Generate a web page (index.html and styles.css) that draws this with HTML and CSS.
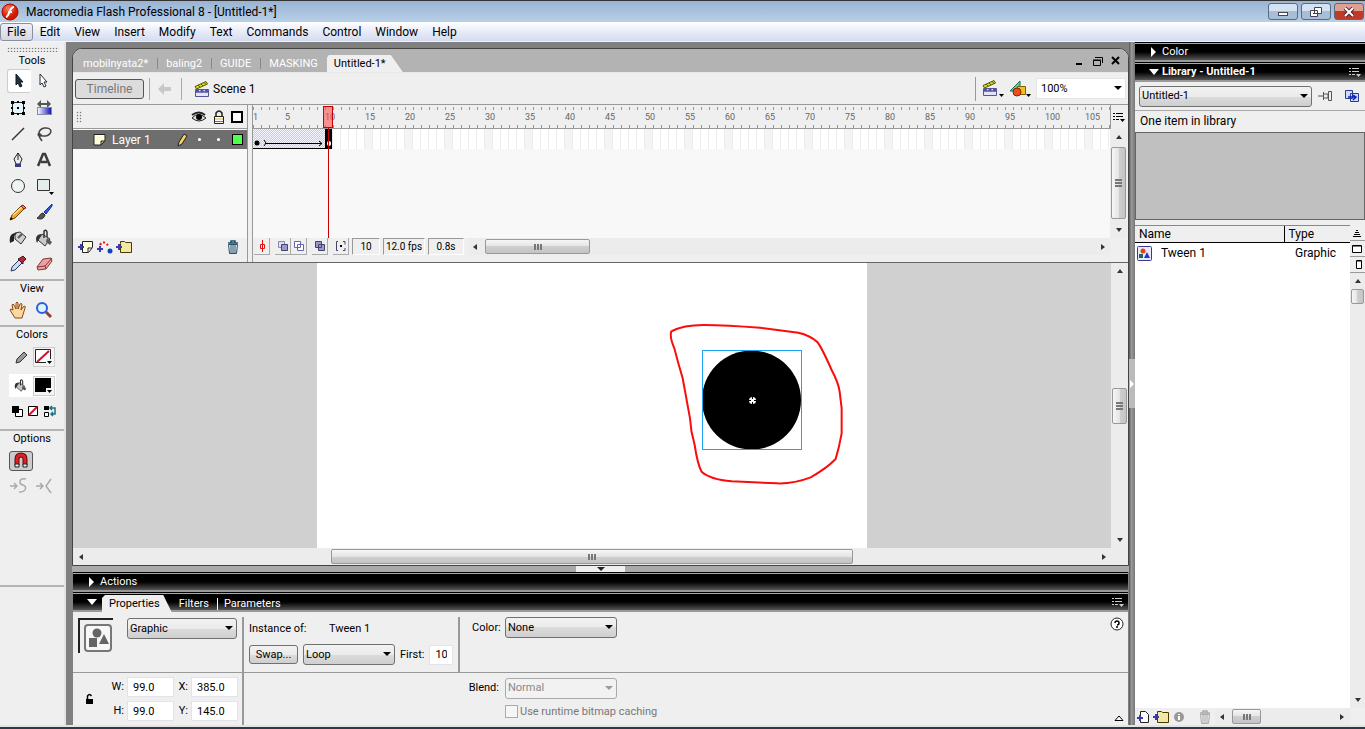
FILE: index.html
```html
<!DOCTYPE html>
<html lang="en">
<head>
<meta charset="UTF-8">
<title>Macromedia Flash Professional 8 - [Untitled-1*]</title>
<link rel="stylesheet" href="styles.css">
</head>
<body>

<!-- shared icons -->
<svg class="defs" width="0" height="0">
  <defs>
    <linearGradient id="blueFade"><stop offset="0" stop-color="#fff"/><stop offset="1" stop-color="#1010b0"/></linearGradient>
    <radialGradient id="redBall" cx=".4" cy=".3"><stop offset="0" stop-color="#ff8060"/><stop offset="1" stop-color="#d41800"/></radialGradient>
    <symbol id="clapper" viewBox="0 0 16 16">
      <path d="M1 5.500L12 .5l1.500 2.500L2.500 8z" fill="#d8d820" stroke="#5a5a00"/>
      <path d="M4 4l2 2M7 3l2 2M10 1.500l2 2" stroke="#5a5a00"/>
      <path d="M1.500 8.500h13v7h-13z" fill="#e4e4ff" stroke="#55559a"/>
      <path d="M2 11h12M2 9.500h3M6.500 9.500h3M11 9.500h3" stroke="#55559a" stroke-width="1.500"/>
    </symbol>
    <symbol id="menu" viewBox="0 0 12 10">
      <path d="M0 1.500h2M0 4.500h2M0 7.500h2M3 1.500h7M3 4.500h7M3 7.500h3" stroke="currentColor"/>
      <path d="M7 7h5l-2.500 3z" fill="currentColor"/>
    </symbol>
    <symbol id="pencil" viewBox="0 0 18 18">
      <path d="M1 17l2-5L12 3l3 3-9 9z" fill="#f5a623" stroke="#6b4210"/>
      <path d="M4 12l9-8" stroke="#ffe08a" stroke-width="1.500"/>
      <path d="M12 3l2-1 3 3-2 1z" fill="#f08080" stroke="#7b2010"/>
      <path d="M1 17l1-3 2 2z"/>
    </symbol>
    <symbol id="bucket" viewBox="0 0 18 18">
      <path d="M7 5l8 5-5 7-7-6z" fill="#c8c8c8" stroke="#333"/>
      <path d="M9 9V2q2-2 3 1v5" fill="none" stroke="#333" stroke-width="1.500"/>
      <path d="M7 5C1 5 0 9 2 14l2-4z" fill="#333"/>
      <path d="M12 9l5 4-2 3-4-3z" fill="#555"/>
    </symbol>
    <symbol id="folderPlus" viewBox="0 0 16 14">
      <path d="M4.500 3.500v-2h4l1 1h6v10h-11z" fill="#f4e6a4" stroke="#4a3a00"/>
      <path d="M0 7h6M3 4v6" stroke="#3a3ab0" stroke-width="2"/>
    </symbol>
    <symbol id="trash" viewBox="0 0 12 14">
      <path d="M1 3h10M4 3V1h4v2" fill="none" stroke="currentColor" stroke-width="1.500"/>
      <path d="M1.500 4.500h9l-1 9h-7z" fill="none" stroke="currentColor"/>
      <path d="M4 5v8M6 5v8M8 5v8" stroke="currentColor"/>
    </symbol>
  </defs>
</svg>

<header class="titlebar">
  <svg width="18" height="18" viewBox="0 0 18 18"><circle cx="9" cy="9" r="8" fill="url(#redBall)" stroke="#a01000"/><path d="M13 4C8 4 9 13 5 14M7 9h4" fill="none" stroke="#fff" stroke-width="2"/></svg>
  <h1>Macromedia Flash Professional 8 - [Untitled-1*]</h1>
  <div class="window-buttons">
    <button aria-label="Minimize"><svg width="12" height="12"><rect x="1.500" y="6.500" width="9" height="3" fill="#fff" stroke="#445"/></svg></button>
    <button aria-label="Restore"><svg width="12" height="12"><path d="M4.500 1.500h7v6h-7zM.5 4.500h7v6h-7z" fill="#fff" stroke="#445"/><path d="M3 7h2v1H3z" fill="#445"/></svg></button>
    <button class="close" aria-label="Close"><svg width="12" height="10"><path d="M2 1l8 8M10 1L2 9" stroke="#523" stroke-width="4"/><path d="M2 1l8 8M10 1L2 9" stroke="#fff" stroke-width="2"/></svg></button>
  </div>
</header>

<nav class="menubar">
  <button class="open">File</button>
  <button>Edit</button>
  <button>View</button>
  <button>Insert</button>
  <button>Modify</button>
  <button>Text</button>
  <button>Commands</button>
  <button>Control</button>
  <button>Window</button>
  <button>Help</button>
</nav>

<div class="workspace">

  <aside class="tools">
    <div class="grip"></div>
    <section>
      <h2>Tools</h2>
      <div class="tool-grid">
        <button class="selected" aria-label="Selection"><svg width="18" height="18"><path d="M6 2l7 8h-3l2 4-2 1-2-4-2 2z" fill="#223044" stroke="#101820"/></svg></button>
        <button aria-label="Subselection"><svg width="18" height="18"><path d="M5 1l7 8H9l2 4-2 1-2-4-2 2z" fill="#fff" stroke="#202c38"/></svg></button>
        <button aria-label="Free transform"><svg width="18" height="18"><rect x="3.500" y="3.500" width="11" height="11" fill="#e4f4fc" stroke="#222"/><path d="M2 2h3v3H2zM13 2h3v3h-3zM2 13h3v3H2zM13 13h3v3h-3zM8 2h2v2H8zM8 14h2v2H8zM2 8h2v2H2zM14 8h2v2h-2zM8 8h2v2H8z"/></svg></button>
        <button aria-label="Gradient transform"><svg width="18" height="18"><path d="M2 5l4-4v3h6V1l4 4-4 4V6H6v3z" fill="#555"/><rect x="2.500" y="8.500" width="14" height="7" fill="url(#blueFade)" stroke="#88a"/></svg></button>
        <button aria-label="Line"><svg width="18" height="18"><path d="M3 15L15 3" stroke="#333" stroke-width="1.500"/></svg></button>
        <button aria-label="Lasso"><svg width="18" height="18"><ellipse cx="10" cy="7" rx="6" ry="4" transform="rotate(-12 10 7)" fill="none" stroke="#444" stroke-width="1.500"/><path d="M4 8c-3 3 3 4 2 2s-3 0-1 3l2 3" fill="none" stroke="#444" stroke-width="1.500"/></svg></button>
        <button aria-label="Pen"><svg width="18" height="18"><path d="M9 2l4 6-2 5H7L5 8z" fill="#eee" stroke="#222"/><path d="M9 2v7" stroke="#222"/><path d="M6 13h6v3H6z" fill="#3a3a80"/></svg></button>
        <button aria-label="Text"><svg width="18" height="18"><path d="M3 15L8 3h2l5 12M6 11h6" fill="none" stroke="#3c3c3c" stroke-width="2.500"/></svg></button>
        <button aria-label="Oval"><svg width="18" height="18"><circle cx="9" cy="9" r="6.500" fill="#eef4f4" stroke="#333"/></svg></button>
        <button aria-label="Rectangle"><svg width="20" height="20"><path d="M3.500 3.500h12v11h-12z" fill="#e4ecec" stroke="#333"/><path d="M15 16h5l-2.500 3z"/></svg></button>
        <button aria-label="Pencil"><svg width="18" height="18"><use href="#pencil"/></svg></button>
        <button aria-label="Brush"><svg width="18" height="18"><path d="M17 1l-8 8 2 2 6-8z" fill="#2a5cf0" stroke="#102a90"/><path d="M2 15c3-1 2-4 6-5l2 2c-1 4-5 5-8 3z" fill="#555" stroke="#222"/></svg></button>
        <button aria-label="Ink bottle"><svg width="18" height="18"><path d="M6 4l5-1 6 5-5 7-6-5z" fill="#d0d0d0" stroke="#333"/><path d="M1 14C0 7 2 4 8 4L5 7v5z" fill="#222"/><path d="M9 9l4-4" stroke="#555" stroke-width="2"/></svg></button>
        <button aria-label="Paint bucket"><svg width="18" height="18"><use href="#bucket"/></svg></button>
        <button aria-label="Eyedropper"><svg width="18" height="18"><path d="M2 16l1-4 7-7 3 3-7 7z" fill="#bfe0f4" stroke="#335"/><path d="M9 4l2-1 3-2 3 3-3 3v2z" fill="#b02a3a" stroke="#501018"/></svg></button>
        <button aria-label="Eraser"><svg width="18" height="18"><path d="M2 12l6-8 8-1 1 3-6 8-8 1z" fill="#f0a0a0" stroke="#803a3a"/><path d="M2 12l8-1 7-8M10 11l1 3" fill="none" stroke="#803a3a"/></svg></button>
      </div>
    </section>
    <section>
      <h2>View</h2>
      <div class="tool-grid">
        <button aria-label="Hand"><svg width="18" height="18"><path d="M6 17L1 9q0-2 3 0L3 4q1-2 2 0l2 4V2q1-2 2 0v6l2-5q2-1 2 0l-1 6 3-4q2 0 1 2l-3 10z" fill="#fcd8a0" stroke="#8a4a10"/></svg></button>
        <button aria-label="Zoom"><svg width="18" height="18"><path d="M11 11l5 5" stroke="#904040" stroke-width="3"/><circle cx="7" cy="7" r="5" fill="#dcf2ff" stroke="#2a5ce0" stroke-width="2"/></svg></button>
      </div>
    </section>
    <section>
      <h2>Colors</h2>
      <div class="color-row">
        <svg width="16" height="16"><path d="M2 14l1-4 7-7 3 3-7 7z" fill="#999" stroke="#333"/></svg>
        <button class="swatch" aria-label="Stroke color"><svg width="18" height="16"><path d="M.5.5h15v13H.5z" fill="#fff" stroke="#222"/><path d="M2 13L14 2" stroke="#d01030" stroke-width="2"/><path d="M11 10h7v6h-7z" fill="#f4f4f4"/><path d="M12 12h5l-2.500 3z"/></svg></button>
      </div>
      <div class="color-row active">
        <svg width="13" height="13"><use href="#bucket"/></svg>
        <button class="swatch" aria-label="Fill color"><svg width="18" height="16"><path d="M0 0h16v14H0z"/><path d="M11 10h7v6h-7z" fill="#f4f4f4"/><path d="M12 12h5l-2.500 3z"/></svg></button>
      </div>
      <div class="mini-row">
        <svg width="12" height="12"><path d="M4.500 4.500h7v7h-7z" fill="#fff" stroke="#000"/><path d="M1 1h7v7H1z"/></svg>
        <svg width="12" height="12"><path d="M1.500 1.500h9v9h-9z" fill="#fff" stroke="#000"/><path d="M2 10l8-8" stroke="#d01030" stroke-width="2"/></svg>
        <svg width="14" height="12"><path d="M1 1h5v4H1z"/><path d="M1.500 7.500h4v4h-4z" fill="#fff" stroke="#000"/><path d="M7 3h5v6H8M9 1L7 3l2 2M10 7L8 9l2 2" fill="none" stroke="#1c7284" stroke-width="1.500"/></svg>
      </div>
    </section>
    <section class="options">
      <h2>Options</h2>
      <div class="tool-grid">
        <button class="pressed" aria-label="Snap to objects"><svg width="18" height="18"><path d="M5 13V7q0-4 4-4t4 4v6" fill="none" stroke="#501010" stroke-width="5"/><path d="M5 12V7q0-4 4-4t4 4v5" fill="none" stroke="#e02020" stroke-width="3"/><path d="M3 12h4v3H3zM11 12h4v3h-4z" fill="#eee" stroke="#222"/></svg></button>
      </div>
      <div class="tool-grid">
        <button disabled aria-label="Smooth"><svg width="18" height="18"><path d="M1 9h6M5 6l3 3-3 3M17 2c-8-1-7 5-3 6s4 7-4 7" fill="none" stroke="#aaa" stroke-width="1.500"/></svg></button>
        <button disabled aria-label="Straighten"><svg width="18" height="18"><path d="M1 9h6M5 6l3 3-3 3M16 2l-5 7 5 7" fill="none" stroke="#aaa" stroke-width="1.500"/></svg></button>
      </div>
    </section>
  </aside>

  <main class="center">
    <div class="document">
      <div class="tabs">
        <button>mobilnyata2*</button>
        <button>baling2</button>
        <button>GUIDE</button>
        <button>MASKING</button>
        <button class="active">Untitled-1*</button>
        <div class="doc-buttons">
          <svg width="10" height="10"><path d="M1 8h6" stroke="#000" stroke-width="2"/></svg>
          <svg width="10" height="10"><path d="M2 1.500h7.500V7M.5 4.500h7v5h-7zM0 4h8" fill="none" stroke="#000"/></svg>
          <svg width="10" height="10"><path d="M1 1l7 7M8 1L1 8" stroke="#000" stroke-width="2"/></svg>
        </div>
      </div>

      <div class="scenebar">
        <button class="timeline-btn">Timeline</button>
        <div class="back"><svg width="14" height="12"><path d="M0 6l6-6v4h7v4H6v4z" fill="#c8c8c8"/></svg></div>
        <svg width="16" height="16"><use href="#clapper"/></svg>
        <span class="scene-name">Scene 1</span>
        <div class="scene-right">
          <svg width="22" height="20"><use href="#clapper" width="16" height="18"/><path d="M17 15h5l-2.500 3z"/></svg>
          <svg width="22" height="20"><path d="M1 12L11 2v10z" fill="#58d0a0" stroke="#1c7050"/><path d="M8.500 7.500h8v8h-8z" fill="#f0c020" stroke="#806000"/><circle cx="8" cy="13" r="4" fill="#e85020" stroke="#902000"/><path d="M17 15h5l-2.500 3z"/></svg>
          <div class="select zoom"><select aria-label="Zoom level"><option>100%</option></select></div>
        </div>
      </div>

      <div class="timeline">
        <div class="layers">
          <div class="layers-head">
            <div class="dots"></div>
            <svg width="16" height="12"><path d="M1 7q6-7 14 0-7 6-14 0z" fill="#ddd" stroke="#222"/><circle cx="8" cy="6" r="3"/><path d="M1 4q7-5 13 0" fill="none" stroke="#222" stroke-width="2"/></svg>
            <svg width="12" height="14"><path d="M3 7V3q3-4 6 0v4" fill="none" stroke="#222" stroke-width="1.500"/><path d="M1.500 6.500h9v7h-9z" fill="#fff" stroke="#222"/><path d="M2 9h8" stroke="#e0b020"/><path d="M2 11.500h8" stroke="#3a7ac0"/></svg>
            <svg width="12" height="12"><rect x="1" y="1" width="10" height="10" fill="#fff" stroke="#000" stroke-width="2"/></svg>
          </div>
          <div class="layer">
            <svg width="14" height="12"><path d="M1 .5h11V7l-4 4H1z" fill="#ffffdc" stroke="#222"/><path d="M8 11V7h4z" fill="#bbb98a" stroke="#222"/></svg>
            <span class="layer-name">Layer 1</span>
            <svg width="11" height="14"><path d="M1 13l1-4 5-8 3 2-5 8z" fill="#f4d060" stroke="#222"/></svg>
            <i class="dot"></i>
            <i class="dot"></i>
            <i class="outline"></i>
          </div>
          <div class="layers-foot">
            <svg width="16" height="14"><path d="M4.500 1.500h10v6l-4 5h-6z" fill="#ffffdc" stroke="#222"/><path d="M10 12V8h4" fill="none" stroke="#222"/><path d="M0 7h6M3 4v6" stroke="#3a3ab0" stroke-width="2"/></svg>
            <svg width="16" height="14"><path d="M3 5q4-6 9 2" fill="none" stroke="#e01010" stroke-width="2" stroke-dasharray="2 2"/><path d="M0 9h6M3 6v6" stroke="#3a3ab0" stroke-width="2"/><circle cx="13" cy="11" r="2.500" fill="#1040c0"/></svg>
            <svg width="16" height="14"><use href="#folderPlus"/></svg>
            <svg class="trash" width="12" height="14"><use href="#trash"/></svg>
          </div>
        </div>

        <div class="frames">
          <div class="ruler">
            <span class="first">1</span><span>5</span><span>10</span><span>15</span><span>20</span><span>25</span><span>30</span><span>35</span><span>40</span><span>45</span><span>50</span><span>55</span><span>60</span><span>65</span><span>70</span><span>75</span><span>80</span><span>85</span><span>90</span><span>95</span><span>100</span><span>105</span>
          </div>
          <div class="track">
            <div class="tween"><svg width="72" height="9"><circle cx="4" cy="4" r="2.500"/><path d="M11 1l2 3-2 3M12 4.500h57M66 2l3 2.500L66 7" fill="none" stroke="#000"/></svg></div>
            <div class="keyframe"></div>
          </div>
          <div class="playhead"></div>
          <div class="frames-foot">
            <button aria-label="Center frame"><svg width="12" height="14"><path d="M6.500 1v12M4.500 5.500h4v4h-4z" fill="none" stroke="#e01010"/></svg></button>
            <button aria-label="Onion skin" class="gap-left"><svg width="12" height="12"><path d="M1.500 1.500h6v6h-6z" fill="#ddf" stroke="#88a"/><path d="M4.500 4.500h6v6h-6z" fill="#9a9ad0" stroke="#446"/></svg></button>
            <button aria-label="Onion skin outlines"><svg width="12" height="12"><path d="M1.500 1.500h6v6h-6zM4.500 4.500h6v6h-6z" fill="#fff" stroke="#66a"/></svg></button>
            <button aria-label="Edit multiple frames" class="gap-left"><svg width="12" height="12"><path d="M1.500 1.500h6v6h-6zM4.500 4.500h6v6h-6z" fill="#9a9ad0" stroke="#446"/></svg></button>
            <button aria-label="Modify onion markers" class="gap-left"><svg width="12" height="12"><path d="M3 1.500H1.500v9H3M8 1.500h2v3M10 8v2.500H8" fill="none" stroke="#446"/><path d="M5 5h2v2H5z"/></svg></button>
            <output class="w28">10</output>
            <output class="w42">12.0 fps</output>
            <output class="w36">0.8s</output>
            <div class="scroll-h">
              <i class="arrow left"></i>
              <i class="thumb timeline-thumb"></i>
              <i class="arrow right push"></i>
            </div>
          </div>
        </div>

        <div class="timeline-side">
          <div class="side-menu"><svg width="12" height="10"><use href="#menu"/></svg></div>
          <div class="scroll-v">
            <i class="arrow up"></i>
            <i class="thumb frames-thumb"></i>
            <i class="arrow down push"></i>
          </div>
        </div>
      </div>

      <div class="stage-area">
        <div class="pasteboard">
          <div class="stage">
            <svg width="550" height="285">
              <circle cx="434.500" cy="137" r="49.500"/>
              <rect x="385.500" y="87.500" width="99" height="99" fill="none" stroke="#1aa3f0"/>
              <circle cx="435.500" cy="137.500" r="3.500" fill="#fff"/>
              <path d="M431 137.500h9M435.500 133v9" stroke="#000"/>
              <path d="M435.500 136v3M434 137.500h3" stroke="#fff"/>
              <path transform="translate(343 47) scale(.3333)" d="M34 64Q70 45 130 45Q200 46 300 53L415 68Q450 76 472 96Q485 112 515 180Q536 220 539 245L545 295L545 370Q538 410 527 447Q500 475 452 502Q400 522 350 520L215 514Q150 508 125 485Q113 465 104 405Q92 365 90 325L68 205L55 160L43 115Q28 80 34 64z" fill="none" stroke="#fa0c0c" stroke-width="6"/>
            </svg>
          </div>
        </div>
        <div class="scroll-v">
          <i class="arrow up"></i>
          <i class="thumb stage-thumb-v"></i>
          <i class="arrow down push"></i>
        </div>
      </div>
      <div class="scroll-h stage-scroll">
        <i class="arrow left"></i>
        <i class="thumb stage-thumb-h"></i>
        <i class="arrow right push"></i>
      </div>
    </div>

    <div class="splitter-h"><button aria-label="Collapse panels"></button></div>

    <section class="panel">
      <header class="panel-head"><i class="tri closed"></i><h2>Actions</h2></header>
    </section>

    <section class="panel">
      <header class="panel-head with-tabs">
        <i class="tri"></i>
        <button class="active">Properties</button>
        <button>Filters</button>
        <button class="divided">Parameters</button>
        <svg class="panel-menu" width="12" height="10"><use href="#menu"/></svg>
      </header>
      <form class="properties">
        <div class="cell kind">
          <div class="symbol"><svg width="28" height="28"><rect x="1" y="1" width="26" height="26" rx="3" fill="#f8f8f8" stroke="#777" stroke-width="2"/><circle cx="13" cy="9" r="4.500" fill="#666"/><path d="M5 14h8v9H5zM15 20l5-10 5 10z" fill="#666"/></svg></div>
          <div class="select w110"><select aria-label="Instance behavior"><option>Graphic</option></select></div>
        </div>
        <div class="cell instance">
          <div class="line"><span class="caption">Instance of:</span><span>Tween 1</span></div>
          <div class="line">
            <button type="button" class="push-btn">Swap...</button>
            <div class="select w92"><select aria-label="Loop options"><option>Loop</option></select></div>
            <label for="first">First:</label>
            <input id="first" class="short" value="10">
          </div>
        </div>
        <div class="cell color">
          <label for="color">Color:</label>
          <div class="select w112"><select id="color"><option>None</option></select></div>
          <svg class="help" width="14" height="14"><circle cx="7" cy="7" r="6" fill="#fff" stroke="#222"/><path d="M5 6q0-2 2-2t2 2-2 2M7 9v2" fill="none" stroke="#000" stroke-width="1.500"/></svg>
        </div>
        <div class="cell size">
          <svg width="10" height="12"><path d="M2.500 6V3q2-3 4 0" fill="none" stroke="#000" stroke-width="1.500"/><path d="M1 6h7v5H1z"/></svg>
          <div class="size-grid">
            <label for="w">W:</label><input id="w" value="99.0">
            <label for="x">X:</label><input id="x" value="385.0">
            <label for="h">H:</label><input id="h" value="99.0">
            <label for="y">Y:</label><input id="y" value="145.0">
          </div>
        </div>
        <div class="cell blend">
          <label for="blend">Blend:</label>
          <div class="select w112 disabled"><select id="blend" disabled><option>Normal</option></select></div>
          <label class="check"><input type="checkbox" disabled>Use runtime bitmap caching</label>
          <svg class="expand" width="10" height="6"><path d="M1 5.500h8L5 1z" fill="#fff" stroke="#000"/></svg>
        </div>
      </form>
    </section>
  </main>

  <div class="splitter-v"><button aria-label="Collapse library"></button></div>

  <aside class="library">
    <header class="panel-head"><i class="tri closed"></i><h2>Color</h2></header>
    <header class="panel-head"><i class="tri"></i><h2 class="bold">Library - Untitled-1</h2><svg class="panel-menu" width="12" height="10"><use href="#menu"/></svg></header>
    <div class="lib-file">
      <div class="select"><select aria-label="Library file"><option>Untitled-1</option></select></div>
      <svg width="14" height="12"><path d="M0 6h5M5.500 2v8M6 4h4v4H6M10.500 1.500h3v9h-3z" fill="none" stroke="#555"/></svg>
      <svg width="14" height="12"><path d="M.5.500h7v8h-7zM5.500 3.500h8v8h-8z" fill="#c8dcff" stroke="#2a3a90"/><path d="M3 7h7M8 5l3 2-3 3" fill="none" stroke="#1020c0" stroke-width="1.500"/></svg>
    </div>
    <p class="lib-count">One item in library</p>
    <div class="lib-preview"></div>
    <div class="lib-body">
      <div class="lib-list">
        <table>
          <thead><tr><th>Name</th><th class="type">Type</th></tr></thead>
          <tbody>
            <tr>
              <td><svg width="15" height="15"><rect x=".5" y=".5" width="14" height="14" rx="1" fill="#e8e8ff" stroke="#3a3a90"/><circle cx="6" cy="5" r="2.500" fill="#e84010"/><path d="M2 8h4v4H2z" fill="#107050"/><path d="M7 12l3-6 3 6z" fill="#3030d0"/></svg><span>Tween 1</span></td>
              <td class="type">Graphic</td>
            </tr>
          </tbody>
        </table>
      </div>
      <div class="lib-side">
        <button aria-label="Sort order"><svg width="10" height="10"><path d="M1 8.500h8M2 6.500h6M3 4.500h4M4 2.500h2" stroke="#000"/></svg></button>
        <button aria-label="Wide view"><svg width="10" height="10"><path d="M.5 1.500h9v7h-9zM1 2h8" fill="#fff" stroke="#000"/></svg></button>
        <button aria-label="Narrow view"><svg width="10" height="10"><path d="M4.500.500h5v8h-5zM5 1h4" fill="#fff" stroke="#000"/></svg></button>
        <div class="scroll-v">
          <i class="arrow up"></i>
          <i class="thumb lib-thumb-v"></i>
          <i class="arrow down push"></i>
        </div>
      </div>
    </div>
    <footer class="lib-foot">
      <svg width="12" height="14"><path d="M3.500 1.500h5l3 3v8h-8z" fill="#fff" stroke="#222"/><path d="M0 8h6M3 5v6" stroke="#3a3ab0" stroke-width="2"/></svg>
      <svg width="16" height="14"><use href="#folderPlus"/></svg>
      <svg width="12" height="12"><circle cx="6" cy="6" r="5" fill="#999"/><path d="M6 3v1M6 5v4" stroke="#fff" stroke-width="2"/></svg>
      <svg class="trash off" width="12" height="14"><use href="#trash"/></svg>
      <div class="scroll-h">
        <i class="arrow left"></i>
        <i class="thumb lib-thumb-h"></i>
        <i class="arrow right push"></i>
      </div>
    </footer>
  </aside>

</div>

</body>
</html>
```

FILE: styles.css
```css
*, *::before, *::after {
  box-sizing: border-box;
}

body {
  margin: 0;
  height: 100vh;
  display: flex;
  flex-direction: column;
  font-family: Roboto, "Open Sans", sans-serif;
  font-size: 11px;
  line-height: 16px;
  color: #000;
  background: #808080;
  border-bottom: 2px solid #2c3a48;
  overflow: hidden;
}

h1, h2, p {
  margin: 0;
  font-size: inherit;
  font-weight: normal;
}

svg {
  display: block;
  flex: none;
}

.defs {
  position: absolute;
}

button, input, select {
  font: inherit;
  color: inherit;
  margin: 0;
  padding: 0;
  border: 0;
  background: none;
}

/* title and menu */
.titlebar {
  display: flex;
  align-items: center;
  height: 22px;
  flex: none;
  padding-left: 1px;
  border-top: 1px solid #333;
  background: linear-gradient(#9ab4d4, #b8cfe8);
}

.titlebar h1 {
  flex: 1;
  margin-left: 7px;
  font-size: 12px;
}

.window-buttons {
  display: flex;
  gap: 3px;
  padding-right: 1px;
}

.window-buttons button {
  display: flex;
  align-items: center;
  justify-content: center;
  width: 30px;
  height: 17px;
  border: 1px solid #5a6a80;
  border-radius: 3px;
  background: linear-gradient(#d4e2f2 50%, #a8bdd6 50%);
}

.window-buttons .close {
  background: linear-gradient(#e0a090 50%, #c03a28 50%);
}

.menubar {
  display: flex;
  height: 20px;
  flex: none;
  padding-top: 1px;
  border-bottom: 1px solid #f4f4f4;
  background: linear-gradient(#fff, #e8ecf8 50%, #d4dcf0);
  font-size: 12px;
}

.menubar button {
  height: 18px;
  padding: 0 6px;
  border: 1px solid transparent;
}

.menubar .open {
  border-color: #8a8f9a;
  border-radius: 3px;
  background: linear-gradient(#eef0f6, #d4d8e4);
}

.workspace {
  display: flex;
  flex: 1;
  min-height: 0;
  border-bottom: 2px solid #e4e4e4;
}

/* tools */
.tools {
  width: 66px;
  flex: none;
  background: #efefef;
  border-right: 2px solid #e4e4e4;
}

.grip {
  height: 5px;
  margin: 5px 5px 1px 7px;
  background: radial-gradient(circle, #777 30%, transparent 50%) 0 0 / 3px 3px;
}

.tools section {
  padding-bottom: 2px;
  border-bottom: 2px solid #b4b4b4;
}

.tools h2 {
  text-align: center;
}

.tool-grid {
  display: grid;
  grid-template-columns: 26px 26px;
  grid-auto-rows: 26px;
  padding-left: 5px;
}

.tool-grid button {
  display: flex;
  align-items: center;
  justify-content: center;
}

.tool-grid .selected {
  width: 24px;
  height: 24px;
  margin-left: 2px;
  background: #fff;
  border: 1px solid #ccc;
  border-right-color: #fff;
  border-radius: 3px;
}

.tool-grid .pressed {
  width: 24px;
  height: 20px;
  margin: 4px 0 0 4px;
  border: 1px solid #555;
  border-radius: 3px;
  background: #ccc;
}

.color-row {
  display: flex;
  align-items: center;
  gap: 3px;
  height: 28px;
  padding-left: 14px;
}

.color-row.active {
  height: 23px;
  margin: 3px 8px 5px 9px;
  padding-left: 5px;
  gap: 6px;
  background: #fff;
}

.swatch {
  padding: 1px;
  border: 1px solid #ccc;
  background: #f4f4f4;
}

.mini-row {
  display: flex;
  gap: 4px;
  padding: 3px 0 10px 11px;
}

.tools .options {
  height: 156px;
}

/* document window */
.center {
  display: flex;
  flex-direction: column;
  flex: 1;
  min-width: 0;
  margin-left: 6px;
  padding-top: 6px;
}

.document {
  display: flex;
  flex-direction: column;
  flex: 1;
  min-height: 0;
  border: 1px solid #444;
  border-radius: 10px 10px 0 0;
  background: #efefef;
  overflow: hidden;
}

.tabs {
  display: flex;
  align-items: flex-end;
  height: 24px;
  flex: none;
  padding-left: 1px;
  border-bottom: 1px solid #e8e8e8;
  background: #b3b3b3;
  color: #fff;
}

.tabs button {
  height: 17px;
  padding: 0 9px;
}

.tabs button + button:not(.active) {
  background: linear-gradient(#888, #888) 0 3px / 1px 11px no-repeat;
}

.tabs .active {
  width: 76px;
  padding: 0 8px 0 7px;
  color: #000;
  text-align: left;
  background: #efefef;
  clip-path: polygon(0 3px, 2px 0, 64px 0, 76px 100%, 0 100%);
}

.doc-buttons {
  display: flex;
  gap: 8px;
  margin-left: auto;
  padding: 0 7px 6px 0;
}

.scenebar {
  display: flex;
  align-items: center;
  height: 32px;
  flex: none;
  padding-left: 2px;
  border-bottom: 1px solid #999;
  font-size: 12px;
}

.timeline-btn {
  width: 69px;
  height: 20px;
  border: 1px solid #555;
  border-radius: 3px;
  background: #dcdcdc;
  color: #777;
}

.back {
  width: 33px;
  height: 22px;
  margin: 0 12px 0 5px;
  padding: 5px 8px;
  border: 1px solid #aaa;
  border-width: 0 1px;
}

.scene-name {
  margin-left: 3px;
}

.scene-right {
  display: flex;
  align-items: center;
  gap: 5px;
  height: 24px;
  margin-left: auto;
  padding: 0 2px 0 6px;
  border-left: 1px solid #999;
}

/* drop-downs */
.select {
  position: relative;
  flex: none;
  height: 21px;
  font-size: 11px;
}

.select select {
  appearance: none;
  display: block;
  width: 100%;
  height: 100%;
  padding: 0 20px 0 2px;
  border: 1px solid #707070;
  border-radius: 3px;
  background: linear-gradient(#f2f2f2, #ebebeb 50%, #dcdcdc 50%, #cfcfcf);
}

.select::after {
  content: "";
  position: absolute;
  right: 4px;
  top: 8px;
  border: 4px solid transparent;
  border-top-color: #000;
  border-bottom: 0;
  pointer-events: none;
}

.select.disabled {
  color: #888;
}

.select.disabled select {
  opacity: 1;
  border-color: #aaa;
  background: #f2f2f2;
}

.select.disabled::after {
  border-top-color: #999;
}

.zoom {
  width: 90px;
}

.zoom select {
  padding-left: 4px;
  border-color: #e4e4e4;
  border-radius: 0;
  background: #fff;
}

.w110 { width: 110px; }
.w112 { width: 112px; }
.w92 { width: 92px; }

/* timeline */
.timeline {
  display: flex;
  height: 158px;
  flex: none;
  border-bottom: 1px solid #666;
}

.layers {
  display: flex;
  flex-direction: column;
  width: 175px;
  flex: none;
  border-right: 1px solid #999;
  background: #f8f8f8;
}

.layers-head {
  display: flex;
  align-items: center;
  gap: 6px;
  height: 24px;
  padding-right: 4px;
  border-bottom: 1px solid #999;
  background: #efefef;
}

.dots {
  width: 6px;
  height: 12px;
  margin: 0 auto 0 3px;
  background: radial-gradient(circle, #777 30%, transparent 50%) 0 0 / 3px 3px;
}

.layer {
  display: flex;
  align-items: center;
  height: 19px;
  margin-top: 1px;
  padding: 0 4px 0 20px;
  background: #6e6e6e;
  color: #fff;
  font-size: 12px;
}

.layer-name {
  flex: 1;
  margin-left: 5px;
}

.dot {
  width: 3px;
  height: 3px;
  margin-left: 10px;
  border-radius: 2px;
  background: #fff;
}

.dot + .dot {
  margin-left: 16px;
}

.outline {
  width: 11px;
  height: 11px;
  margin-left: 12px;
  border: 1px solid #000;
  background: #50ff50;
}

.layers-foot {
  display: flex;
  align-items: center;
  gap: 3px;
  height: 24px;
  margin-top: auto;
  padding: 0 8px 6px 5px;
  background: #efefef;
}

.trash {
  margin-left: auto;
  color: #24506c;
}

.trash.off {
  color: #aaa;
}

.frames {
  position: relative;
  display: flex;
  flex-direction: column;
  flex: 1;
  min-width: 0;
  margin-left: 4px;
  border-left: 1px solid #999;
  background: #f8f8f8;
}

.ruler {
  display: flex;
  align-items: center;
  height: 24px;
  border-bottom: 1px solid #999;
  overflow: hidden;
  background:
    repeating-linear-gradient(90deg, #999 0 1px, transparent 1px 8px) 0 2px / 100% 3px no-repeat,
    repeating-linear-gradient(90deg, #999 0 1px, transparent 1px 8px) 0 20px / 100% 3px no-repeat,
    #efefef;
  color: #666;
  font-size: 9px;
}

.ruler span {
  width: 40px;
  flex: none;
}

.ruler .first {
  width: 32px;
}

.track {
  display: flex;
  height: 20px;
  background:
    repeating-linear-gradient(90deg, transparent 0 7px, #ececec 7px 8px),
    repeating-linear-gradient(90deg, transparent 0 32px, #f4f4f4 32px 40px),
    #fff;
}

.tween {
  display: flex;
  align-items: flex-end;
  width: 72px;
  border-bottom: 1px solid #000;
  background: repeating-conic-gradient(#c8c8ff 0 25%, #f4f4ff 0 50%) 0 0 / 2px 2px;
}

.keyframe {
  width: 7px;
  padding: 12px 1px 0 2px;
  background: #000;
}

.keyframe::after {
  content: "";
  display: block;
  width: 4px;
  height: 5px;
  border-radius: 2px;
  background: #fff;
}

/* playhead lies over ruler and track */
.playhead {
  position: absolute;
  left: 70px;
  top: 1px;
  width: 10px;
  height: 22px;
  border: 1px solid #c80000;
  background: rgba(255, 80, 80, 0.6);
}

.playhead::after {
  content: "";
  position: absolute;
  left: 4px;
  top: 20px;
  width: 1px;
  height: 111px;
  background: #c80000;
}

.frames-foot {
  display: flex;
  height: 24px;
  margin-top: auto;
  padding: 0 0 7px 1px;
  background: #efefef;
}

.frames-foot button {
  display: flex;
  align-items: center;
  justify-content: center;
  width: 16px;
  border: 1px solid #aaa;
  border-width: 0 1px 1px 0;
}

.frames-foot .gap-left {
  margin-left: 5px;
}

.frames-foot output {
  margin-left: 3px;
  border: 1px solid #fff;
  border-top-color: #999;
  border-left-color: #999;
  text-align: center;
  font-size: 10px;
}

.w28 { width: 28px; }
.w42 { width: 42px; }
.w36 { width: 36px; }

.frames-foot .scroll-h {
  flex: 1;
  margin-left: 4px;
}

.timeline-side {
  display: flex;
  flex-direction: column;
  width: 18px;
  flex: none;
  padding-bottom: 24px;
}

.side-menu {
  height: 24px;
  padding: 7px 0 0 2px;
  border-left: 1px solid #999;
}

.timeline-side .scroll-v {
  flex: 1;
}

/* scrollbars */
.scroll-h, .scroll-v {
  display: flex;
  align-items: center;
  background: #ececec;
}

.scroll-h {
  height: 17px;
  padding: 0 5px;
}

.scroll-v {
  flex-direction: column;
  width: 17px;
  padding: 6px 0;
}

.arrow {
  border: 3px solid transparent;
  flex: none;
}

.arrow.left { border-right: 4px solid #333; border-left: 0; }
.arrow.right { border-left: 4px solid #333; border-right: 0; }
.arrow.up { border-bottom: 4px solid #333; border-top: 0; }
.arrow.down { border-top: 4px solid #333; border-bottom: 0; }
.scroll-h .push { margin-left: auto; }
.scroll-v .push { margin-top: auto; }

.thumb {
  display: flex;
  align-items: center;
  justify-content: center;
  flex: none;
  border: 1px solid #999;
  border-radius: 2px;
}

.thumb::after {
  content: "";
  width: 8px;
  height: 6px;
}

.scroll-h .thumb {
  height: 15px;
  background: linear-gradient(#f6f6f6, #e4e4e4 50%, #cfcfd0 50%, #c4c4c8);
}

.scroll-h .thumb::after {
  background: repeating-linear-gradient(90deg, #777 0 2px, transparent 2px 3px);
}

.scroll-v .thumb {
  width: 15px;
  background: linear-gradient(90deg, #f6f6f6, #e4e4e4 50%, #cfcfd0 50%, #c4c4c8);
}

.scroll-v .thumb::after {
  width: 7px;
  height: 8px;
  background: repeating-linear-gradient(#777 0 2px, transparent 2px 3px);
}

.timeline-thumb { width: 105px; margin-left: 8px; }
.frames-thumb { height: 72px; margin-top: 8px; }
.stage-thumb-v { height: 36px; margin-top: 115px; }
.stage-thumb-h { width: 522px; margin-left: 248px; }
.lib-thumb-h { width: 29px; margin-left: 8px; }
.scroll-v .lib-thumb-v { width: 13px; height: 15px; margin-top: 6px; }
.scroll-v .lib-thumb-v::after { display: none; }

/* stage */
.stage-area {
  display: flex;
  flex: 1;
  min-height: 0;
}

.pasteboard {
  display: flex;
  justify-content: center;
  flex: 1;
  min-width: 0;
  background: #d0d0d0;
}

.stage {
  width: 550px;
  background: #fff;
}

.stage-scroll {
  flex: none;
  padding: 0 22px 0 6px;
}

.splitter-h {
  height: 6px;
  flex: none;
  background: #aaa;
}

.splitter-h button {
  display: flex;
  align-items: center;
  justify-content: center;
  width: 49px;
  height: 6px;
  margin: 0 auto;
  background: #efefef;
}

.splitter-h button::after {
  content: "";
  border: 4px solid transparent;
  border-top-color: #222;
  border-bottom: 0;
}

.splitter-v {
  display: flex;
  align-items: center;
  width: 6px;
  flex: none;
  background: linear-gradient(90deg, #555, #999 40%, #777);
}

.splitter-v button {
  display: flex;
  align-items: center;
  justify-content: center;
  width: 6px;
  height: 49px;
  background: #bbb;
}

.splitter-v button::after {
  content: "";
  border: 4px solid transparent;
  border-left-color: #fff;
  border-right: 0;
}

/* panels */
.panel {
  flex: none;
  margin: 0 1px;
}

.panel-head {
  display: flex;
  align-items: center;
  height: 20px;
  flex: none;
  padding: 0 4px 0 16px;
  border-top: 1px solid #000;
  border-bottom: 2px solid #999;
  background: linear-gradient(#aaa 1px, #000 1px, #000 9px, #555);
  color: #fff;
}

.bold {
  font-weight: bold;
}

.tri {
  width: 10px;
  margin: 0 3px 0 -2px;
  border: 5px solid transparent;
  border-top: 6px solid #fff;
  border-bottom: 0;
}

.tri.closed {
  width: 8px;
  margin: 0 3px 0 0;
  border: 5px solid transparent;
  border-left: 5px solid #fff;
  border-right: 0;
}

.panel-menu {
  margin-left: auto;
  color: #ccc;
}

.with-tabs button {
  align-self: flex-end;
  height: 17px;
  margin-bottom: -2px;
  padding: 0 8px 0 7px;
  line-height: 17px;
}

.with-tabs .divided {
  background: linear-gradient(#fff, #fff) 0 3px / 1px 12px no-repeat;
}

.with-tabs .active {
  margin-left: 2px;
  padding-right: 12px;
  color: #000;
  background: #efefef;
  clip-path: polygon(0 3px, 3px 0, 88% 0, 100% 100%, 0 100%);
}

.properties {
  display: grid;
  grid-template-columns: 171px 216px 1fr;
  grid-template-rows: 56px 52px;
  padding-top: 5px;
  background: #efefef;
}

.cell {
  display: flex;
  align-items: center;
}

.kind, .instance, .color {
  border-bottom: 1px solid #999;
}

.kind, .size, .instance {
  border-right: 2px solid #999;
}

.kind {
  align-items: flex-start;
  gap: 14px;
  padding: 1px 0 0 5px;
}

.symbol {
  padding: 4px 1px 1px 4px;
  border: 2px solid #222;
  border-width: 2px 0 0 2px;
}

.instance {
  flex-direction: column;
  align-items: stretch;
  gap: 5px;
  padding: 1px 4px 0 5px;
}

.line {
  display: flex;
  align-items: center;
  gap: 5px;
  height: 21px;
}

.caption {
  width: 75px;
}

.push-btn {
  width: 49px;
  height: 19px;
  border: 1px solid #707070;
  border-radius: 3px;
  background: linear-gradient(#f2f2f2, #ebebeb 50%, #dcdcdc 50%, #cfcfcf);
}

.properties input:not([type]) {
  width: 47px;
  height: 20px;
  padding: 0 5px;
  border: 1px solid #e0e3ea;
  background: #fff;
}

.properties input.short {
  width: 24px;
}

.color {
  align-items: flex-start;
  gap: 4px;
  padding: 0 4px 0 12px;
}

.color label {
  width: 29px;
  line-height: 21px;
}

.help {
  margin-left: auto;
}

.size {
  gap: 15px;
  padding-left: 12px;
}

.size-grid {
  display: grid;
  grid-template-columns: 14px 47px 11px 47px;
  gap: 4px 3px;
  align-items: center;
  text-align: right;
}

.blend {
  grid-column: 2 / 4;
  display: grid;
  grid-template-columns: 255px 112px 1fr;
  grid-template-rows: 21px 18px;
  column-gap: 6px;
  row-gap: 4px;
  align-content: center;
  align-items: center;
  padding-right: 4px;
}

.blend > label:first-child {
  text-align: right;
}

.check {
  grid-column: 2 / 4;
  grid-row: 2;
  display: flex;
  align-items: center;
  gap: 2px;
  color: #777;
}

.check input {
  appearance: none;
  width: 13px;
  height: 13px;
  border: 1px solid #aaa;
  background: #f6f6f6;
}

.expand {
  grid-column: 3;
  grid-row: 2;
  justify-self: end;
  align-self: end;
}

/* library */
.library {
  display: flex;
  flex-direction: column;
  width: 230px;
  flex: none;
  background: #efefef;
}

.lib-file {
  display: flex;
  align-items: center;
  gap: 13px;
  height: 29px;
  padding: 0 6px 0 4px;
  border-bottom: 1px solid #aaa;
}

.lib-file .select {
  flex: 1;
  margin-right: -7px;
}

.lib-count {
  height: 21px;
  padding: 2px 5px;
  font-size: 12px;
}

.lib-preview {
  height: 88px;
  flex: none;
  border: 1px solid #666;
  background: #c0c0c0;
}

.lib-body {
  display: flex;
  flex: 1;
  min-height: 0;
  margin-top: 5px;
}

.lib-list {
  flex: 1;
  background: #fff;
}

.lib-list table {
  width: 100%;
  border-collapse: collapse;
  font-size: 12px;
}

.lib-list th {
  height: 17px;
  padding: 0 4px;
  border-top: 1px solid #888;
  border-bottom: 1px solid #000;
  background: #efefef;
  font-weight: normal;
  line-height: 14px;
  text-align: left;
}

.lib-list th.type {
  width: 66px;
  border-left: 1px solid #000;
}

.lib-list td {
  height: 20px;
  padding: 0 2px;
}

.lib-list td:first-child {
  display: flex;
  align-items: center;
  gap: 9px;
}

.lib-list td.type {
  padding-left: 11px;
}

.lib-side {
  display: flex;
  flex-direction: column;
  width: 15px;
  flex: none;
}

.lib-side button {
  height: 16px;
  padding: 3px 2px;
  border-bottom: 1px solid #999;
}

.lib-side .scroll-v {
  flex: 1;
  width: 15px;
}

.lib-foot {
  display: flex;
  align-items: center;
  gap: 4px;
  height: 17px;
  flex: none;
  padding-left: 2px;
}

.lib-foot .scroll-h {
  width: 136px;
  padding-right: 7px;
  margin-right: 14px;
}
```
